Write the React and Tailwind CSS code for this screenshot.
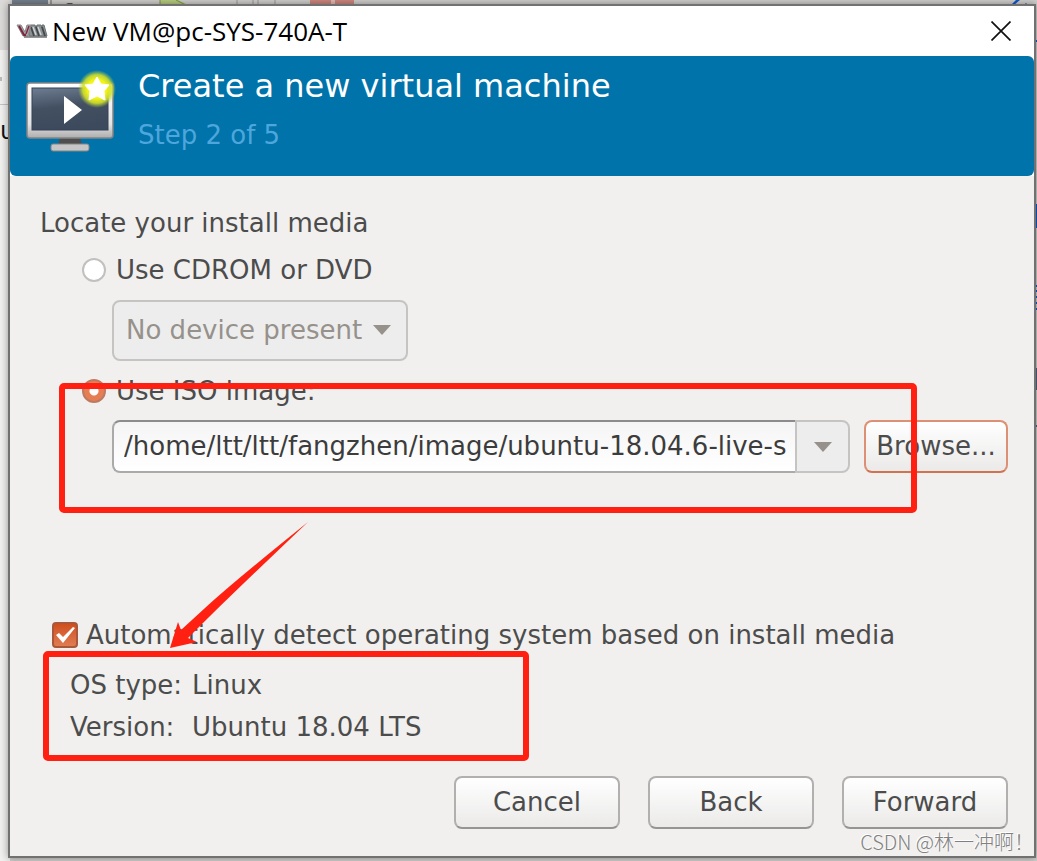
import React, { useState } from "react";

// sliver of the desktop that stays visible around the dialog
function Backdrop() {
  return (
    <>
      <svg className="absolute left-0 top-0" width="400" height="861" aria-hidden="true">
        <rect x="0" y="0" width="10" height="50" fill="#dcdbda" />
        <rect x="0" y="50" width="10" height="811" fill="#f1f1f0" />
        <rect x="12" y="0" width="36" height="5" fill="#76828f" />
        <rect x="50" y="0" width="2" height="5" fill="#9a9a9a" />
        <path d="M64 5 L68 3 H72 L74 5 Z" fill="#555" />
        <path d="M160 0 H178 L188 5 H160 Z" fill="#b9cf80" />
        <path d="M160 0 V5 M176 0 L186 5" stroke="#7c9a45" fill="none" />
        <path d="M237 0 V5 M253 0 V5 M258 0 V5 M275 0 V5" stroke="#999" fill="none" />
        <rect x="310" y="0" width="44" height="5" fill="#d08880" />
        <rect x="331" y="0" width="4" height="5" fill="#e5bdb8" />
        <rect x="0" y="77" width="2" height="4" fill="#bbb" />
        <rect x="0" y="104" width="10" height="1" fill="#c4c4c4" />
        <text x="0" y="139" fontSize="26" fontFamily="'Open Sans', sans-serif" fill="#111">u</text>
      </svg>
      <svg className="absolute right-0 top-0" width="26" height="480" aria-hidden="true">
        <path d="M1 4 L5 0 H9 L3 5 Z M13 5 L15 3 L17 5 Z" fill="#1459c9" />
        <rect x="24" y="40" width="2" height="2" fill="#1459c9" />
        <rect x="24" y="204" width="2" height="24" fill="#1459c9" />
        <path d="M24 286 h2 M24 291 h2 M24 297 h2 M24 303 h2 M24 309 h2" stroke="#1459c9" strokeWidth="2" />
        <rect x="24" y="368" width="2" height="22" fill="#56617a" />
        <rect x="24" y="425" width="2" height="2" fill="#56617a" />
      </svg>
    </>
  );
}

function VmLogo() {
  return (
    <svg width="32" height="16" viewBox="0 0 32 16" aria-hidden="true">
      <g fill="none" strokeLinejoin="round">
        <path d="M13 13 L13 8 L15 2 H19 L20 5 L21 2 H25 L26 5 V2 H28 L31 13 Z" fill="#8c9294" stroke="#6b7072" />
        <path d="M15 4 L18 13 M20 4 L23 13 M26 4 L29 13" stroke="#43494b" strokeWidth="1.8" />
        <path d="M17 4 L20 12 M22 4 L25 12" stroke="#d0d4d5" strokeWidth="1.4" />
        <path d="M1 2 H5 L9 9 L11 2 H15 L12 13 H7 Z" fill="#a9a4a7" stroke="#8a8689" />
        <path d="M3 3 L8 12 L10 12" stroke="#7c2740" strokeWidth="2" />
        <path d="M10 11 L13 3" stroke="#7c2740" strokeWidth="1.4" />
        <path d="M8 14 H31" stroke="#666" strokeWidth="1.4" />
      </g>
    </svg>
  );
}

function MonitorIcon() {
  return (
    <svg width="92" height="84" viewBox="0 0 92 84" aria-hidden="true">
      <defs>
        <linearGradient id="bezel" x1="0" y1="0" x2="0" y2="1">
          <stop offset="0" stopColor="#fff" />
          <stop offset="0.75" stopColor="#e3e3e3" />
          <stop offset="1" stopColor="#adadad" />
        </linearGradient>
        <linearGradient id="screen" x1="0" y1="0" x2="0.2" y2="1">
          <stop offset="0" stopColor="#6f7d92" />
          <stop offset="0.5" stopColor="#435062" />
          <stop offset="1" stopColor="#3d4a5d" />
        </linearGradient>
        <radialGradient id="glow">
          <stop offset="0.5" stopColor="#f4f416" />
          <stop offset="0.75" stopColor="#cfe02c" stopOpacity="0.9" />
          <stop offset="1" stopColor="#a8cc40" stopOpacity="0" />
        </radialGradient>
      </defs>
      <path d="M34 68 H54 L56 75 H32 Z" fill="#4e4e4e" />
      <rect x="25" y="74" width="38" height="7" rx="2" fill="#c6c6c6" stroke="#858585" />
      <rect x="1" y="13" width="86" height="55" rx="3" fill="url(#bezel)" stroke="#858585" strokeWidth="1.5" />
      <rect x="6" y="18" width="76" height="42" fill="url(#screen)" stroke="#35435a" />
      <path d="M38 26 L56 40 L38 54 Z" fill="#fff" />
      <circle cx="71" cy="19" r="19" fill="url(#glow)" />
      <path d="M71 7 L75 14 L83 15 L78 21 L79 30 L71 26 L63 30 L64 21 L59 15 L67 14 Z" fill="#fff" stroke="#fff" strokeLinejoin="round" />
    </svg>
  );
}

function Caret() {
  return (
    <svg width="20" height="12" viewBox="0 0 20 12" aria-hidden="true">
      <path d="M1 1 H19 L10 11 Z" fill="#96918b" />
    </svg>
  );
}

// red marker drawn above the form
function Marker() {
  return (
    <svg className="pointer-events-none absolute left-0 top-0 z-10" width="920" height="780" aria-hidden="true">
      <g fill="none" stroke="#ff2012" strokeWidth="6">
        <rect x="52" y="380" width="852" height="124" rx="2" />
        <rect x="36" y="648" width="480" height="104" rx="2" />
      </g>
      <path d="M298 516 Q222 577 195 602 L171 624 L168 616 L160 642 L187 636 L178 632 L198 612 Q238 573 298 516 Z" fill="#ff2012" />
    </svg>
  );
}

function Radio({ label, checked, onChange }) {
  return (
    <label className="flex items-center gap-2.5 leading-[30px]">
      <input
        type="radio"
        name="media"
        checked={checked}
        onChange={onChange}
        className="size-6 appearance-none rounded-full border-2 border-[#c2c0be] bg-white checked:border-[#bd7a61] checked:bg-[radial-gradient(circle,#fff_0_4px,#e57f53_5px)]"
      />
      {label}
    </label>
  );
}

const footerButton =
  "h-[53px] w-[166px] rounded-lg border-2 border-[#b2b0af] border-b-[#969493] bg-linear-to-b from-white to-[#ebeae9]";

export default function App() {
  const [media, setMedia] = useState("iso");
  const [detect, setDetect] = useState(true);
  const [path, setPath] = useState("/home/ltt/ltt/fangzhen/image/ubuntu-18.04.6-live-s");

  return (
    <div className="relative min-h-screen overflow-hidden bg-[#d2d1d0] pb-[3px] pl-2 pr-px pt-1 font-['DejaVu_Sans',sans-serif] text-[26px] text-[#4c4c4c]">
      <Backdrop />
      <main className="relative border-2 border-[#717171] bg-[#f1f0ee] shadow-[0_0_8px_rgba(0,0,0,0.4)]">
        <header className="flex h-[50px] items-center bg-white pl-1.5 pr-[19px] font-['Open_Sans',sans-serif] text-black">
          <VmLogo />
          <span className="ml-1 flex-1 text-[26px]">New VM@pc-SYS-740A-T</span>
          <button aria-label="Close" className="p-1">
            <svg width="20" height="20" viewBox="0 0 20 20" aria-hidden="true">
              <path d="M0.500 0.500 L19.500 19.500 M19.500 0.500 L0.500 19.500" stroke="#111" strokeWidth="1.700" />
            </svg>
          </button>
        </header>
        <div className="bg-white">
          <section className="flex h-[120px] gap-5 rounded-md bg-[#0073aa] pl-4 pt-3.5">
            <MonitorIcon />
            <div>
              <h1 className="text-[32px] leading-8 text-white">Create a new virtual machine</h1>
              <p className="mt-[18px] leading-[30px] text-[#4da6dc]">Step 2 of 5</p>
            </div>
          </section>
        </div>

        <form className="px-[26px] pb-[27px] pt-8" onSubmit={(e) => e.preventDefault()}>
          <h2 className="pl-1 leading-[30px]">Locate your install media</h2>
          <div className="mt-[17px] pl-[46px]">
            <Radio label="Use CDROM or DVD" checked={media === "cdrom"} onChange={() => setMedia("cdrom")} />
          </div>
          <div className="mt-[15px] flex pl-[76px]">
            <div className="relative">
              <select
                disabled
                aria-label="CDROM device"
                className="h-[61px] w-[296px] appearance-none rounded-lg border-2 border-[#c5c4c3] bg-[#ededed] pl-3 text-[#96918b] opacity-100"
              >
                <option>No device present</option>
              </select>
              <span className="pointer-events-none absolute right-4 top-6">
                <Caret />
              </span>
            </div>
          </div>
          <div className="mt-[15px] pl-[46px]">
            <Radio label="Use ISO image:" checked={media === "iso"} onChange={() => setMedia("iso")} />
          </div>
          <div className="mt-3.5 flex h-[53px] pl-[76px]">
            <input
              type="text"
              aria-label="ISO image path"
              value={path}
              onChange={(e) => setPath(e.target.value)}
              className="min-w-0 flex-1 rounded-l-lg border-2 border-r-0 border-[#aaa] border-t-[#8c8c8c] bg-linear-to-b from-[#f5f5f5] to-white pl-2.5 text-[#3c3c3c]"
            />
            <button
              type="button"
              aria-label="Recent images"
              className="flex w-[55px] items-center justify-center rounded-r-lg border-2 border-[#c5c4c3] bg-[#ededed]"
            >
              <Caret />
            </button>
            <button
              type="button"
              className="ml-3.5 w-36 rounded-lg border-2 border-[#dc9174] border-b-[#d07350] bg-linear-to-b from-white to-[#ebeae9]"
            >
              Browse...
            </button>
          </div>

          <label className="mt-[147px] flex items-center gap-2 pl-4 leading-[30px]">
            <span className="grid size-[26px] shrink-0">
              <input
                type="checkbox"
                checked={detect}
                onChange={(e) => setDetect(e.target.checked)}
                className="peer col-start-1 row-start-1 appearance-none rounded border-2 border-[#a9583a] bg-white checked:bg-linear-to-b checked:from-[#cf4f1d] checked:to-[#e07c52]"
              />
              <svg
                className="pointer-events-none invisible col-start-1 row-start-1 peer-checked:visible"
                width="26"
                height="26"
                viewBox="0 0 26 26"
                aria-hidden="true"
              >
                <path d="M4 13 L7 11 L11 15 L21 5 L23 6 L11 21 Z" fill="#fff" />
              </svg>
            </span>
            Automatically detect operating system based on install media
          </label>
          <dl className="mt-5 grid grid-cols-[122px_1fr] gap-y-3 pl-[34px] leading-[30px]">
            <dt>OS type:</dt>
            <dd>Linux</dd>
            <dt>Version:</dt>
            <dd>Ubuntu 18.04 LTS</dd>
          </dl>

          <div className="mt-[34px] flex justify-end gap-7">
            <button type="button" className={footerButton}>Cancel</button>
            <button type="button" className={footerButton}>Back</button>
            <button type="submit" className={footerButton}>Forward</button>
          </div>
        </form>
        <Marker />
        <p className="absolute bottom-0 right-0 font-['Noto_Sans_CJK_SC',sans-serif] text-[20px] font-light leading-7 text-[#808080] [text-shadow:-1px_-1px_0_#fff]">
          CSDN @林一冲啊！
        </p>
      </main>
    </div>
  );
}
